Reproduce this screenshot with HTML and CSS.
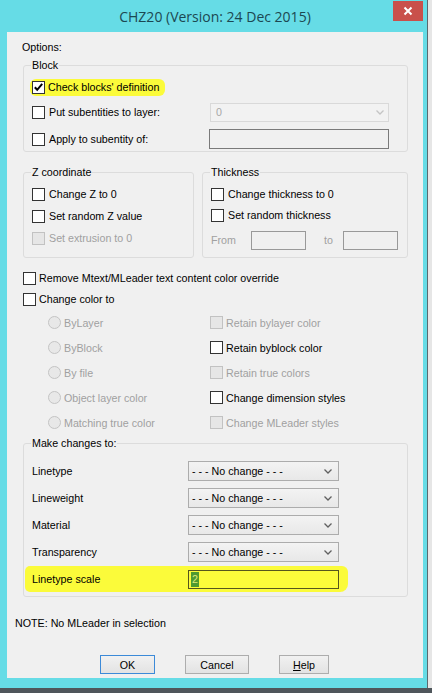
FILE: index.html
```html
<!DOCTYPE html>
<html>
<head>
<meta charset="utf-8">
<link rel="stylesheet" href="styles.css">
</head>
<body>
<div class="screen">
  <div class="top">
    <div class="window">
      <div class="titlebar">
        <span></span>
        <span class="title">CHZ20 (Version: 24 Dec 2015)</span>
        <span class="close"><svg width="10" height="10" viewBox="0 0 10 10"><path d="M1.5 1.5 L8.5 8.5 M8.5 1.5 L1.5 8.5" stroke="#fff" stroke-width="2" fill="none"/></svg></span>
      </div>
      <div class="client">
        <div class="options">Options:</div>

        <fieldset class="group block">
          <legend>Block</legend>
          <div class="row">
            <span class="hl"><span class="cb"><svg width="11" height="11" viewBox="0 0 11 11"><path d="M1.8 5.2 L4.2 7.8 L9.2 1.8" stroke="#000" stroke-width="2" fill="none"/></svg></span>Check blocks' definition</span>
          </div>
          <div class="row r2">
            <span class="cbl wide"><span class="cb"></span>Put subentities to layer:</span>
            <span class="select layer disabled"><span class="val">0</span><svg class="chev" width="8" height="5" viewBox="0 0 8 5"><path d="M0.5 0.5 L4 4 L7.5 0.5" stroke="#c4c4c4" stroke-width="1.3" fill="none"/></svg></span>
          </div>
          <div class="row r3">
            <span class="cbl wide2"><span class="cb"></span>Apply to subentity of:</span>
            <span class="textbox subent"></span>
          </div>
        </fieldset>

        <div class="pair">
          <fieldset class="group zc">
            <legend>Z coordinate</legend>
            <div class="row"><span class="cbl"><span class="cb"></span>Change Z to 0</span></div>
            <div class="row gap2"><span class="cbl"><span class="cb"></span>Set random Z value</span></div>
            <div class="row gap2"><span class="cbl dis"><span class="cb off"></span>Set extrusion to 0</span></div>
          </fieldset>
          <fieldset class="group thick">
            <legend>Thickness</legend>
            <div class="row"><span class="cbl"><span class="cb"></span>Change thickness to 0</span></div>
            <div class="row gap1"><span class="cbl"><span class="cb"></span>Set random thickness</span></div>
            <div class="row gap5">
              <span class="from dis">From</span>
              <span class="textbox small"></span>
              <span class="to dis">to</span>
              <span class="textbox small"></span>
            </div>
          </fieldset>
        </div>

        <div class="row remove"><span class="cbl tight"><span class="cb"></span>Remove Mtext/MLeader text content color override</span></div>
        <div class="row chcolor"><span class="cbl tight"><span class="cb"></span>Change color to</span></div>

        <div class="colorgrid">
          <span class="opt dis"><span class="radio"></span>ByLayer</span>
          <span class="opt dis"><span class="cb off"></span>Retain bylayer color</span>
          <span class="opt dis"><span class="radio"></span>ByBlock</span>
          <span class="opt"><span class="cb"></span>Retain byblock color</span>
          <span class="opt dis"><span class="radio"></span>By file</span>
          <span class="opt dis"><span class="cb off"></span>Retain true colors</span>
          <span class="opt dis"><span class="radio"></span>Object layer color</span>
          <span class="opt"><span class="cb"></span>Change dimension styles</span>
          <span class="opt dis"><span class="radio"></span>Matching true color</span>
          <span class="opt dis"><span class="cb off"></span>Change MLeader styles</span>
        </div>

        <fieldset class="group changes">
          <legend>Make changes to:</legend>
          <div class="row crow first">
            <span class="clabel">Linetype</span>
            <span class="select combo"><span class="val">- - - No change - - -</span><svg class="chev" width="8" height="5" viewBox="0 0 8 5"><path d="M0.5 0.5 L4 4 L7.5 0.5" stroke="#606060" stroke-width="1.3" fill="none"/></svg></span>
          </div>
          <div class="row crow">
            <span class="clabel">Lineweight</span>
            <span class="select combo"><span class="val">- - - No change - - -</span><svg class="chev" width="8" height="5" viewBox="0 0 8 5"><path d="M0.5 0.5 L4 4 L7.5 0.5" stroke="#606060" stroke-width="1.3" fill="none"/></svg></span>
          </div>
          <div class="row crow">
            <span class="clabel">Material</span>
            <span class="select combo"><span class="val">- - - No change - - -</span><svg class="chev" width="8" height="5" viewBox="0 0 8 5"><path d="M0.5 0.5 L4 4 L7.5 0.5" stroke="#606060" stroke-width="1.3" fill="none"/></svg></span>
          </div>
          <div class="row crow">
            <span class="clabel">Transparency</span>
            <span class="select combo"><span class="val">- - - No change - - -</span><svg class="chev" width="8" height="5" viewBox="0 0 8 5"><path d="M0.5 0.5 L4 4 L7.5 0.5" stroke="#606060" stroke-width="1.3" fill="none"/></svg></span>
          </div>
          <div class="row hlrow">
            <span class="clabel">Linetype scale</span>
            <span class="textbox scale"><span class="sel">2</span></span>
          </div>
        </fieldset>

        <div class="note">NOTE: No MLeader in selection</div>

        <div class="buttons">
          <span class="btn ok">OK</span>
          <span class="btn cancel">Cancel</span>
          <span class="btn help"><u>H</u>elp</span>
        </div>
      </div>
    </div>
    <div class="desk-right"></div>
  </div>
  <div class="desk-bottom"></div>
</div>
</body>
</html>
```

FILE: styles.css
```css
* { box-sizing: border-box; }
html, body { margin: 0; padding: 0; }
body {
  width: 432px;
  height: 693px;
  overflow: hidden;
  background: #e2e2e2;
  font-family: "Liberation Sans", Arial, sans-serif;
  font-size: 10.7px;
  color: #000;
}
.screen { display: flex; flex-direction: column; height: 693px; }
.top { display: flex; height: 688px; }
.window {
  width: 427px;
  height: 688px;
  background: #66dce6;
  display: flex;
  flex-direction: column;
  padding: 0 4px 10px 7px;
}
.desk-right { flex: 1; background: #e6e6e6; border-left: 1px solid #5a6a70; }
.desk-bottom { height: 5px; background: #4f565b; }

.titlebar {
  height: 32px;
  display: grid;
  grid-template-columns: 1fr auto 1fr;
  align-items: start;
}
.title {
  font-family: "Open Sans", "Noto Sans", sans-serif;
  font-size: 14px;
  line-height: 20px;
  padding-top: 7px;
  color: #1c4852;
  white-space: nowrap;
}
.close {
  justify-self: end;
  margin-top: 1px;
  width: 30px;
  height: 20px;
  background: #c9504b;
  display: flex;
  align-items: center;
  justify-content: center;
}

.client {
  flex: 1;
  background: #f0f0f0;
  padding-top: 8px;
}
.options { height: 14px; line-height: 14px; padding-left: 15px; }

.group {
  margin: 0;
  border: 1px solid #dcdcdc;
  border-radius: 3px;
  padding: 0 8px;
  min-width: 0;
}
.group legend {
  padding: 0 1px;
  margin-left: -1px;
  height: 14px;
  line-height: 14px;
}

.row { display: flex; align-items: center; height: 20px; }

.cb {
  width: 13px;
  height: 13px;
  border: 1px solid #333;
  background: #fff;
  flex: none;
  display: flex;
  align-items: center;
  justify-content: center;
}
.cb.off { border-color: #c2c2c2; background: #e6e6e6; }
.radio {
  width: 13px;
  height: 13px;
  border: 1px solid #c4c4c4;
  border-radius: 50%;
  background: #e8e8e8;
  flex: none;
}
.cbl { display: flex; align-items: center; gap: 4px; white-space: nowrap; }
.cbl.tight { gap: 3px; }
.dis { color: #a0a0a0; }

/* Block */
.block { width: 385px; margin: 4px 0 0 16px; padding: 5px 8px 2px 8px; }
.hl {
  display: inline-flex;
  align-items: center;
  gap: 3px;
  height: 17px;
  background: #fbfb3a;
  border-radius: 6px;
  padding: 0 6px 0 2px;
  margin-left: -2px;
}
.r2 { margin-top: 5px; }
.r3 { margin-top: 7px; }
.wide { width: 178px; }
.wide2 { width: 177px; }

.select {
  display: flex;
  align-items: center;
  justify-content: space-between;
  border: 1px solid #acacac;
  background: linear-gradient(#f3f3f3, #e8e8e8);
  white-space: nowrap;
}
.select.layer {
  width: 179px;
  height: 19px;
  border-color: #d9d9d9;
  background: #f2f2f2;
  padding: 0 4px 0 5px;
}
.select.disabled .val { color: #a8a8a8; }
.textbox { display: block; border: 1px solid #7a7a7a; background: #f0f0f0; }
.subent { width: 180px; height: 20px; }

/* Z / Thickness */
.pair { display: flex; gap: 8px; margin: 13px 0 0 16px; }
.zc { width: 171px; padding: 5px 8px 0 8px; }
.thick { width: 206px; padding: 5px 8px 7px 8px; }
.gap1 { margin-top: 1px; }
.gap2 { margin-top: 2px; }
.gap5 { margin-top: 5px; }
.from { width: 40px; }
.to { width: 19px; margin-left: 18px; }
.textbox.small { width: 55px; height: 19px; border-color: #999; }

/* colour section */
.remove { margin: 10px 0 0 16px; }
.chcolor { margin: 1px 0 0 16px; }
.colorgrid {
  display: grid;
  grid-template-columns: 162px auto;
  grid-auto-rows: 25px;
  margin: 1px 0 0 41px;
}
.opt { display: flex; align-items: center; gap: 3px; white-space: nowrap; }

/* make changes */
.changes { width: 385px; margin: 1px 0 0 16px; padding: 11px 8px 4px 8px; }
.crow + .crow { margin-top: 7px; }
.clabel { width: 156px; flex: none; }
.select.combo { width: 151px; height: 20px; padding: 0 6px 0 3px; }
.hlrow {
  height: 26px;
  margin-top: 4px;
  margin-left: -7px;
  padding-left: 7px;
  width: 323px;
  background: #fbfb3a;
  border-radius: 5px 6px 8px 5px;
}
.textbox.scale {
  width: 151px;
  height: 19px;
  border-color: #55551c;
  background: transparent;
  padding: 1px 0 0 2px;
}
.sel {
  display: inline-block;
  height: 15px;
  line-height: 15px;
  padding: 0 1px;
  background: #4f9a30;
  color: #dfe97a;
}

.note { margin-top: 19px; padding-left: 8px; height: 14px; line-height: 14px; }
.buttons { display: flex; gap: 30px; margin-top: 25px; padding-left: 93px; }
.btn {
  height: 19px;
  display: flex;
  align-items: center;
  justify-content: center;
  border: 1px solid #adadad;
  background: linear-gradient(#f1f1f1, #e3e3e3);
}
.btn.ok { width: 55px; border-color: #3c8ad8; }
.btn.cancel { width: 64px; }
.btn.help { width: 50px; }
```
